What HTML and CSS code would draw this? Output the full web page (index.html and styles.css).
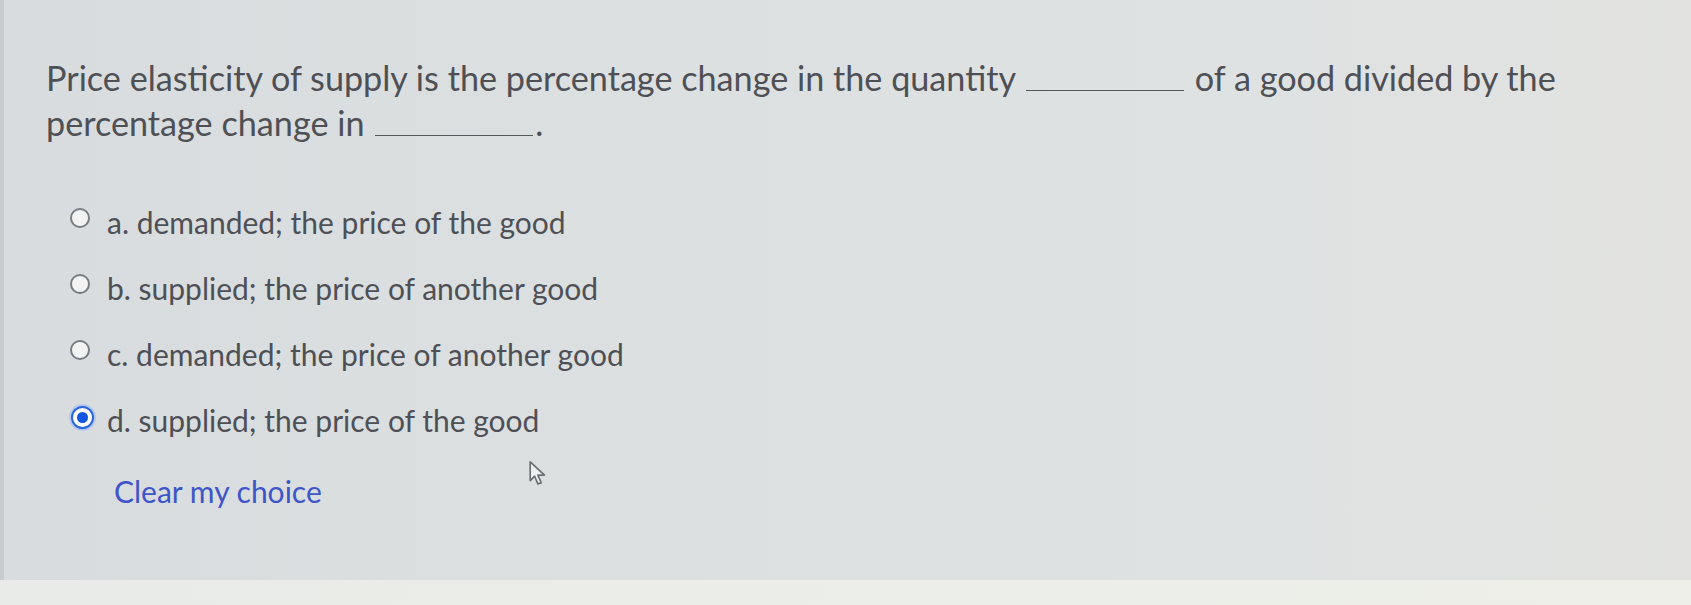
FILE: index.html
```html
<!DOCTYPE html>
<html lang="en">
<head>
<meta charset="utf-8">
<title>Question</title>
<link rel="stylesheet" href="styles.css">
</head>
<body>
<div class="page">
  <div class="edge"></div>
  <main class="que">
    <p class="qtext"><span>Price elasticity of supply is the percentage change in the quantity</span> <span class="blank"></span> <span>of a good divided by the</span><br><span>percentage change in</span> <span class="blank"></span><span>.</span></p>
    <div class="answers">
      <label class="opt"><span class="radio"></span><span class="lbl">a. demanded; the price of the good</span></label>
      <label class="opt"><span class="radio"></span><span class="lbl">b. supplied; the price of another good</span></label>
      <label class="opt"><span class="radio"></span><span class="lbl">c. demanded; the price of another good</span></label>
      <label class="opt"><span class="radio checked"></span><span class="lbl">d. supplied; the price of the good</span></label>
    </div>
    <div class="clear-row">
      <a class="clear" href="#">Clear my choice</a>
      <svg class="cursor" width="22" height="30" viewBox="0 0 20 26"><path d="M2 2 L2 19 L6 15 L9 22 L12 21 L9 14 L15 14 Z" fill="#eef0f0" stroke="#6b6e72" stroke-width="1.5" stroke-linejoin="round"/></svg>
    </div>
  </main>
</div>
<footer class="band"></footer>
</body>
</html>
```
FILE: styles.css
```css
html, body {
  margin: 0;
  padding: 0;
}
body {
  width: 1691px;
  height: 605px;
  overflow: hidden;
  display: flex;
  flex-direction: column;
  background: #dcdfe0;
  font-family: "Lato", "Open Sans", sans-serif;
  color: #4e5055;
}
.page {
  height: 580px;
  display: flex;
  background: linear-gradient(90deg, #d8dcde 0%, #dde0e1 40%, #dfe2e2 75%, #e2e3e1 100%);
}
.edge {
  width: 4px;
  background: #c9cccd;
}
.que {
  flex: 1;
  padding: 55px 0 0 42px;
}
.qtext {
  margin: 0;
  font-size: 34.2px;
  line-height: 45px;
  width: 1560px;
}
.blank {
  display: inline-block;
  width: 158px;
  border-bottom: 1.5px solid #55575b;
  vertical-align: baseline;
  margin: 0 2px;
}
.answers {
  margin-top: 56px;
  padding-left: 24px;
  display: flex;
  flex-direction: column;
  gap: 24px;
}
.opt {
  display: flex;
  align-items: center;
  gap: 17px;
  height: 42px;
  font-size: 30px;
}
.radio {
  width: 16px;
  height: 16px;
  border: 2px solid #797c80;
  border-radius: 50%;
  background: #f2f3f3;
  flex: none;
  margin-top: -8px;
}
.radio.checked {
  width: 11px;
  height: 11px;
  border: 4px solid #ffffff;
  background: #1155e0;
  box-shadow: 0 0 0 2px #2a66dc, 0 0 0 4px #b6c8f0;
  margin-left: 3px;
  margin-right: -2px;
  margin-top: -6px;
}
.clear-row {
  display: flex;
  align-items: flex-start;
  margin-top: 30px;
  padding-left: 68px;
}
.clear {
  font-size: 30px;
  color: #3d55c8;
  text-decoration: none;
  line-height: 40px;
}
.cursor {
  margin-left: 206px;
  margin-top: -12px;
}
.band {
  height: 25px;
  background: linear-gradient(90deg, #e8ebe7 0%, #eceee9 60%, #eeefe8 100%);
}
```
